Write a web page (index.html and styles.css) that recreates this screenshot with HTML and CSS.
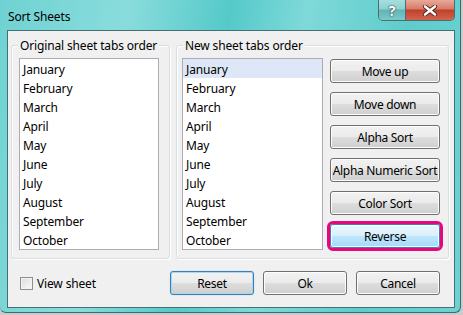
FILE: index.html
```
<!DOCTYPE html>
<html lang="en">

<head>
  <meta charset="UTF-8" />
  <meta name="viewport" content="width=device-width, initial-scale=1.0" />
  <title>Sort Sheets</title>
  <link rel="stylesheet" href="styles.css">
</head>

<body>
  <div class="window">
    <div class="titlebar">
      <span class="title">Sort Sheets</span>
      <div class="controls">
        <span class="ctl help">?</span>
        <span class="ctl close">
          <svg width="16" height="11" viewBox="0 0 16 11">
            <path d="M3 1.5 L13 9.5 M13 1.5 L3 9.5" stroke="#4a1a14" stroke-width="4.2" stroke-linecap="round" />
            <path d="M3 1.5 L13 9.5 M13 1.5 L3 9.5" stroke="#ffffff" stroke-width="2.6" stroke-linecap="round" />
          </svg>
        </span>
      </div>
    </div>

    <div class="client">
      <div class="groups">
        <div class="group group-left">
          <span class="legend">Original sheet tabs order</span>
          <ul class="listbox list-left">
            <li>January</li>
            <li>February</li>
            <li>March</li>
            <li>April</li>
            <li>May</li>
            <li>June</li>
            <li>July</li>
            <li>August</li>
            <li>September</li>
            <li>October</li>
          </ul>
        </div>

        <div class="group group-right">
          <span class="legend">New sheet tabs order</span>
          <ul class="listbox list-right">
            <li class="selected">January</li>
            <li>February</li>
            <li>March</li>
            <li>April</li>
            <li>May</li>
            <li>June</li>
            <li>July</li>
            <li>August</li>
            <li>September</li>
            <li>October</li>
          </ul>
          <div class="side-buttons">
            <button class="btn">Move up</button>
            <button class="btn">Move down</button>
            <button class="btn">Alpha Sort</button>
            <button class="btn">Alpha Numeric Sort</button>
            <button class="btn">Color Sort</button>
            <button class="btn btn-hover marked">Reverse</button>
          </div>
        </div>
      </div>

      <div class="bottom">
        <label class="check">
          <span class="box"></span>
          View sheet
        </label>
        <div class="actions">
          <button class="btn btn-default">Reset</button>
          <button class="btn">Ok</button>
          <button class="btn">Cancel</button>
        </div>
      </div>
    </div>
  </div>
</body>

</html>
```

FILE: styles.css
```
body {
  margin: 0;
  padding: 0;
  background: #c8cccc;
  font-family: "Noto Sans", "Open Sans", Arial, sans-serif;
  font-size: 12px;
  letter-spacing: -0.15px;
  color: #000;
  overflow: hidden;
}

.window {
  width: 461px;
  height: 313px;
  box-sizing: border-box;
  border-right: 1px solid #3f6a6c;
  border-bottom: 1px solid #3f6a6c;
  border-radius: 0 0 6px 6px;
  background:
    linear-gradient(100deg, #6fd2d2 0%, #8adcdc 25%, #55c9c9 45%, #7fd9d9 60%, #5fcccc 80%, #6dd2d2 100%);
}

.titlebar {
  height: 30px;
  display: flex;
  justify-content: space-between;
  align-items: flex-start;
}

.title {
  margin: 8px 0 0 8px;
  font-size: 12px;
  color: #000;
}

.controls {
  display: flex;
  margin-right: 5px;
  border: 1px solid #4a6e70;
  border-top: none;
  border-radius: 0 0 5px 5px;
  overflow: hidden;
}

.ctl {
  height: 20px;
  display: flex;
  align-items: center;
  justify-content: center;
  box-sizing: border-box;
}

.help {
  width: 27px;
  background: linear-gradient(#a6dede 0%, #8ed1d1 45%, #5fb5b5 50%, #7ec8c8 100%);
  border-right: 1px solid #4a6e70;
  color: #fff;
  font-weight: bold;
  font-size: 14px;
  text-shadow: 0 0 2px #224444, 0 0 1px #224444;
}

.close {
  width: 48px;
  background: linear-gradient(#e8a898 0%, #d77a6a 45%, #c0402a 50%, #d0644e 100%);
}

.client {
  margin: 0 0 0 7px;
  width: 448px;
  height: 278px;
  box-sizing: border-box;
  border: 1px solid #466f72;
  background: #f0f0f0;
  padding: 14px 0 0 3px;
}

.groups {
  display: flex;
  gap: 6px;
}

.group {
  position: relative;
  display: flex;
  box-sizing: border-box;
  height: 214px;
  border: 1px solid #d5dfe5;
  border-radius: 3px;
  box-shadow: inset 1px 1px 0 #fff, 1px 1px 0 #fff;
}

.group-left {
  width: 159px;
  padding: 12px 0 0 7px;
}

.group-right {
  width: 273px;
  padding: 12px 0 0 5px;
  gap: 7px;
}

.legend {
  position: absolute;
  top: -9px;
  left: 6px;
  padding: 0 2px;
  background: #f0f0f0;
  color: #000;
  white-space: nowrap;
}

.listbox {
  list-style: none;
  margin: 0;
  padding: 0;
  box-sizing: border-box;
  height: 192px;
  border: 1px solid #abadb3;
  background: #fff;
}

.list-left {
  width: 140px;
}

.list-right {
  width: 141px;
}

.listbox li {
  height: 19px;
  line-height: 21px;
  padding-left: 3px;
}

.listbox .selected {
  background: #dde7f7;
}

.side-buttons {
  display: flex;
  flex-direction: column;
  gap: 9px;
  padding-top: 1px;
}

.btn {
  font-family: inherit;
  font-size: 12px;
  letter-spacing: -0.3px;
  white-space: nowrap;
  color: #000;
  height: 24px;
  width: 110px;
  padding: 0;
  border: 1px solid #707070;
  border-radius: 3px;
  background: linear-gradient(#f2f2f2 0%, #ebebeb 48%, #dddddd 52%, #cfcfcf 100%);
  box-shadow: inset 0 0 0 1px #fcfcfc;
}

.btn-hover {
  border-color: #3c7fb1;
  background: linear-gradient(#eaf6fd 0%, #d9f0fc 48%, #bee6fd 52%, #a7d9f5 100%);
}

.marked {
  outline: 3px solid #e4077d;
  outline-offset: 0;
}

.btn-default {
  border-color: #3c7fb1;
  box-shadow: inset 0 0 0 1px #a8d8f0, 0 0 1px #6fb8e0;
}

.bottom {
  display: flex;
  align-items: center;
  margin-top: 12px;
  padding: 0 14px 0 9px;
}

.check {
  display: flex;
  align-items: center;
  gap: 4px;
}

.box {
  width: 13px;
  height: 13px;
  box-sizing: border-box;
  border: 1px solid #8e8f8f;
  background: linear-gradient(135deg, #dcdcdc, #fafafa);
  box-shadow: inset 0 0 0 1px #f4f4f4;
}

.actions {
  display: flex;
  gap: 9px;
  margin-left: auto;
}

.actions .btn {
  width: 84px;
}
```
